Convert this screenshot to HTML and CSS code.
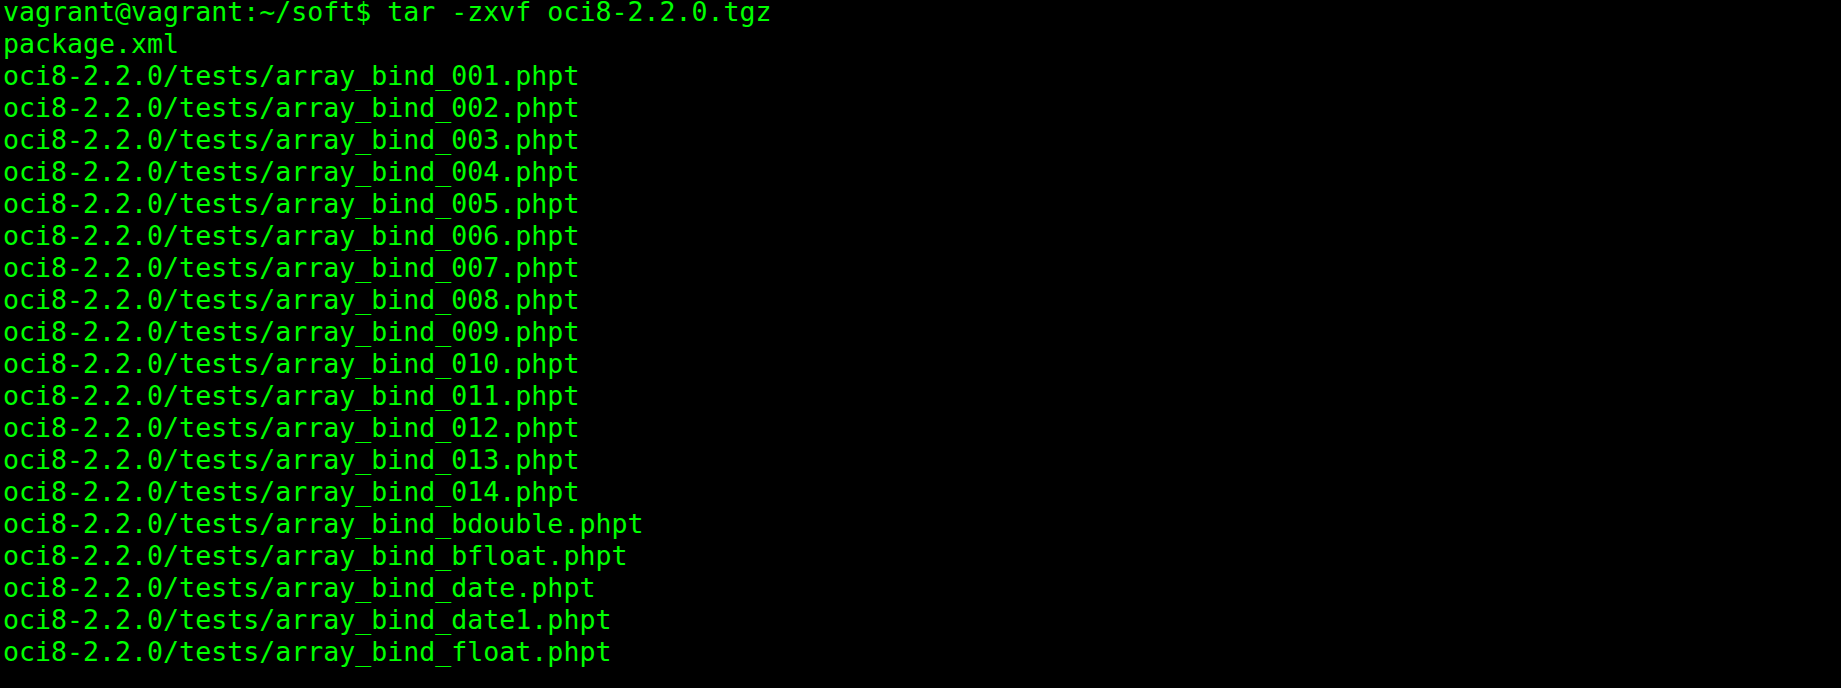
FILE: index.html
```html
<!DOCTYPE html>
<html>
<head>
<meta charset="utf-8">
<link rel="stylesheet" href="styles.css">
</head>
<body>
<div class="term">
<div class="line prompt">vagrant@vagrant:~/soft$ tar -zxvf oci8-2.2.0.tgz</div>
<div class="line">package.xml</div>
<div class="line">oci8-2.2.0/tests/array_bind_001.phpt</div>
<div class="line">oci8-2.2.0/tests/array_bind_002.phpt</div>
<div class="line">oci8-2.2.0/tests/array_bind_003.phpt</div>
<div class="line">oci8-2.2.0/tests/array_bind_004.phpt</div>
<div class="line">oci8-2.2.0/tests/array_bind_005.phpt</div>
<div class="line">oci8-2.2.0/tests/array_bind_006.phpt</div>
<div class="line">oci8-2.2.0/tests/array_bind_007.phpt</div>
<div class="line">oci8-2.2.0/tests/array_bind_008.phpt</div>
<div class="line">oci8-2.2.0/tests/array_bind_009.phpt</div>
<div class="line">oci8-2.2.0/tests/array_bind_010.phpt</div>
<div class="line">oci8-2.2.0/tests/array_bind_011.phpt</div>
<div class="line">oci8-2.2.0/tests/array_bind_012.phpt</div>
<div class="line">oci8-2.2.0/tests/array_bind_013.phpt</div>
<div class="line">oci8-2.2.0/tests/array_bind_014.phpt</div>
<div class="line">oci8-2.2.0/tests/array_bind_bdouble.phpt</div>
<div class="line">oci8-2.2.0/tests/array_bind_bfloat.phpt</div>
<div class="line">oci8-2.2.0/tests/array_bind_date.phpt</div>
<div class="line">oci8-2.2.0/tests/array_bind_date1.phpt</div>
<div class="line">oci8-2.2.0/tests/array_bind_float.phpt</div>
</div>
</body>
</html>
```
FILE: styles.css
```css
html, body {
  margin: 0;
  padding: 0;
  background: #000;
  height: 100%;
  overflow: hidden;
}
.term {
  margin: -4px 0 0 3px;
  font-family: "DejaVu Sans Mono", monospace;
  font-size: 26.6px;
  line-height: 32px;
  color: #00ff00;
}
.line {
  white-space: pre;
  height: 32px;
}
.prompt {
  font-weight: normal;
}
```
